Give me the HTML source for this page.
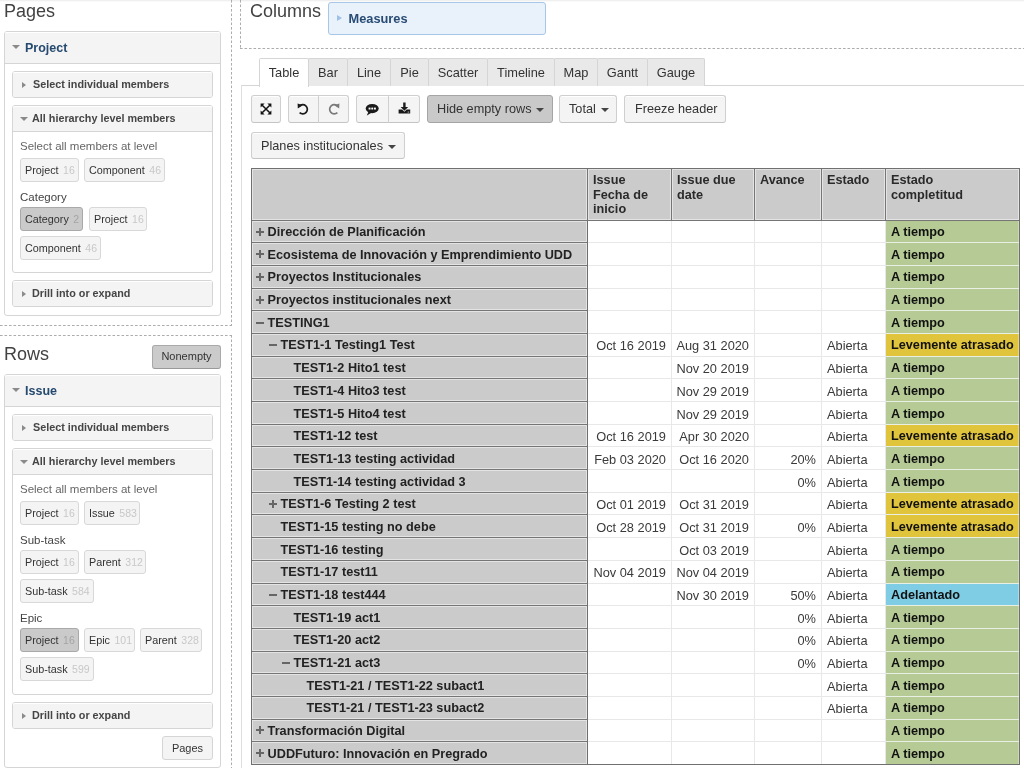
<!DOCTYPE html>
<html><head><meta charset="utf-8">
<style>
*{box-sizing:border-box;margin:0;padding:0}
html,body{will-change:transform;width:1024px;height:768px;overflow:hidden;background:#fff;font-family:"Liberation Sans",sans-serif;color:#333;position:relative}
.abs{position:absolute}
.topshade{position:absolute;left:0;top:0;width:1024px;height:2px;background:linear-gradient(#ebebeb,#fff)}
.title{position:absolute;font-size:18px;color:#424242;line-height:20px}
.dashv{position:absolute;width:1px;background:repeating-linear-gradient(to bottom,#c4c4c4 0 2.6px,transparent 2.6px 4.5px)}
.dashh{position:absolute;height:1px;background:repeating-linear-gradient(to right,#c4c4c4 0 2.6px,transparent 2.6px 4.5px)}
.panel{position:absolute;border:1px solid #d5d5d5;border-radius:3px;background:#fff}
.phead{position:absolute;left:0;right:0;top:0;background:#f4f4f4;border-bottom:1px solid #d5d5d5;border-radius:2px 2px 0 0;box-shadow:inset 0 1px 0 #fff}
.phead .t{position:absolute;font-weight:bold;color:#25496f;font-size:12.5px;margin-top:1px}
.tri-d{position:absolute;width:0;height:0;border-left:4px solid transparent;border-right:4px solid transparent;border-top:4.5px solid #8a8a8a}
.tri-r{position:absolute;width:0;height:0;border-top:3.5px solid transparent;border-bottom:3.5px solid transparent;border-left:4px solid #8a8a8a}
.sub{position:absolute;border:1px solid #d5d5d5;border-radius:3px;background:#fff}
.shead{position:absolute;left:0;right:0;top:0;background:#f4f4f4;border-radius:2px;box-shadow:inset 0 1px 0 #fff}
.shead .t{position:absolute;font-weight:bold;color:#454545;font-size:10.8px;white-space:nowrap}
.lbl{position:absolute;font-size:11.5px;color:#666;white-space:nowrap}
.lbl2{position:absolute;font-size:11.5px;color:#444;white-space:nowrap}
.chip{position:absolute;height:24px;border:1px solid #d8d8d8;border-radius:3px;background:#f4f4f4;font-size:10.8px;color:#333;line-height:22px;padding-left:4px;white-space:nowrap}
.chip i{font-style:normal;color:#c8c8c8;margin-left:4.5px;font-size:10.5px}
.chip.on{background:#cacaca;border-color:#a9a9a9}
.chip.on i{color:#a4a4a4}
.btn{position:absolute;border:1px solid #d5d5d5;border-radius:3px;background:#f4f4f4;font-size:12.5px;color:#333;text-align:center;white-space:nowrap}

.measures{position:absolute;left:328px;top:2px;width:218px;height:33px;border:1px solid #a8c6e8;border-radius:3px;background:#e9f1fb}
.measures .t{position:absolute;left:19.5px;top:8px;font-weight:bold;font-size:12.8px;color:#274b74}
.tabline{position:absolute;left:241px;top:85px;width:783px;height:0;border-top:1px solid #d5d5d5}
.tabv{position:absolute;left:241px;top:85px;width:0;height:683px;border-left:1px solid #dedede}
.tab{position:absolute;top:58px;height:28px;border:1px solid #d5d5d5;border-bottom:none;background:#e9e9e9;font-size:12.8px;color:#333;text-align:center;line-height:27px;border-radius:2px 2px 0 0}
.tab.on{background:#fff;height:29px}
.tb{position:absolute;top:95px;height:28px;border:1px solid #cfcfcf;border-bottom-color:#c4c4c4;border-radius:3px;background:#f4f4f4;box-shadow:inset 0 1px 0 #fff;font-size:12.7px;color:#333;white-space:nowrap}
.tb.dk{background:#c9c9c9;border-color:#a5a5a5;box-shadow:none}
.caret{display:inline-block;width:0;height:0;border-left:4px solid transparent;border-right:4px solid transparent;border-top:4px solid #444;vertical-align:middle;margin-left:5px;position:relative;top:0px}
.tbl{position:absolute;border:1px solid #6e6e6e;background:#6e6e6e}
.tblb{position:absolute;border:1px solid #707070;background:transparent}
.hc{position:absolute;background:#cbcbcb;border-right:1px solid #757575;border-bottom:1px solid #757575;box-shadow:inset 0 1px 0 #e4e4e4,inset 0 -1px 0 #e4e4e4,inset 1px 0 0 #e4e4e4,inset -1px 0 0 #e4e4e4}
.hc .ht{position:absolute;left:5px;top:4px;font-weight:bold;font-size:12.7px;line-height:14.5px;color:#2a2a2a}
.rh{position:absolute;background:#cbcbcb;border-bottom:1px solid #757575;box-shadow:inset 0 1px 0 #e4e4e4,inset 0 -1px 0 #e4e4e4,inset 1px 0 0 #e4e4e4,inset -1px 0 0 #e4e4e4}
.rt{position:absolute;top:4px;font-weight:bold;font-size:12.7px;color:#222;white-space:nowrap;line-height:15px}
.ip,.im{position:absolute}
.im{top:9.5px;width:8px;height:2px;background:#666}
.ip{top:6px;width:8px;height:8px;background:linear-gradient(#666,#666) center/8px 2px no-repeat,linear-gradient(#666,#666) center/2px 8px no-repeat}
.dc{position:absolute;background:#fff;border-bottom:1px solid #e8e8e8;border-right:1px solid #e8e8e8;text-align:right}
.dc span{position:absolute;right:5px;top:4px;font-size:12.8px;color:#3a3a3a;line-height:15px;white-space:nowrap}
.dc.l span{left:5px;right:auto}
.sc{position:absolute;border-bottom:1px solid #e9efe2;box-shadow:inset -1px 0 0 rgba(255,255,255,.3)}
.sc span{position:absolute;left:5px;top:4px;font-weight:bold;font-size:12.7px;color:#111;line-height:15px;white-space:nowrap}
.sc.g{background:#b5ca95}
.sc.y{background:#dfc43c}
.sc.b{background:#7fcce5}
</style></head><body>
<div class="topshade"></div>

<!-- LEFT: Pages -->
<div class="title" style="left:4px;top:1px">Pages</div>
<svg class="abs" style="left:231px;top:0px" width="1" height="326"><line x1="0.5" y1="0" x2="0.5" y2="326" stroke="#acacac" stroke-width="1" stroke-dasharray="2.6 1.9"/></svg>
<svg class="abs" style="left:0px;top:325px" width="232" height="1"><line x1="0" y1="0.5" x2="232" y2="0.5" stroke="#acacac" stroke-width="1" stroke-dasharray="2.6 1.9"/></svg>

<div class="panel" style="left:4px;top:31px;width:217px;height:285px">
  <div class="phead" style="height:32px"><div class="tri-d" style="left:7px;top:13px"></div><div class="t" style="left:20px;top:8px">Project</div></div>
  <div class="sub" style="left:7px;top:39px;width:201px;height:27px">
    <div class="shead" style="height:25px"><div class="tri-r" style="left:9px;top:10px"></div><div class="t" style="left:20px;top:6px">Select individual members</div></div>
  </div>
  <div class="sub" style="left:7px;top:73px;width:201px;height:168px">
    <div class="shead" style="height:26px;border-bottom:1px solid #d5d5d5;border-radius:2px 2px 0 0"><div class="tri-d" style="left:7px;top:11px"></div><div class="t" style="left:19px;top:6px">All hierarchy level members</div></div>
  </div>
  <div class="sub" style="left:7px;top:248px;width:201px;height:27px">
    <div class="shead" style="height:25px"><div class="tri-r" style="left:9px;top:10px"></div><div class="t" style="left:19px;top:6px">Drill into or expand</div></div>
  </div>
</div>
<div class="lbl" style="left:20px;top:140px">Select all members at level</div>
<div class="chip" style="left:20px;top:158px;width:59px">Project<i>16</i></div>
<div class="chip" style="left:84px;top:158px;width:81px">Component<i>46</i></div>
<div class="lbl2" style="left:20px;top:191px">Category</div>
<div class="chip on" style="left:20px;top:207px;width:63px">Category<i>2</i></div>
<div class="chip" style="left:89px;top:207px;width:58px">Project<i>16</i></div>
<div class="chip" style="left:20px;top:236px;width:81px">Component<i>46</i></div>

<!-- LEFT: Rows -->
<svg class="abs" style="left:231px;top:335px" width="1" height="433"><line x1="0.5" y1="0" x2="0.5" y2="433" stroke="#acacac" stroke-width="1" stroke-dasharray="2.6 1.9"/></svg>
<svg class="abs" style="left:0px;top:335px" width="232" height="1"><line x1="0" y1="0.5" x2="232" y2="0.5" stroke="#acacac" stroke-width="1" stroke-dasharray="2.6 1.9"/></svg>
<div class="title" style="left:4px;top:344px">Rows</div>
<div class="btn" style="left:152px;top:345px;width:69px;height:23px;line-height:21px;background:#cbcbcb;border-color:#a9a9a9;border-bottom-color:#999;font-size:11px;height:24px">Nonempty</div>

<div class="panel" style="left:4px;top:374px;width:217px;height:394px">
  <div class="phead" style="height:32px"><div class="tri-d" style="left:7px;top:13px"></div><div class="t" style="left:20px;top:8px">Issue</div></div>
  <div class="sub" style="left:7px;top:39px;width:201px;height:27px">
    <div class="shead" style="height:25px"><div class="tri-r" style="left:9px;top:10px"></div><div class="t" style="left:20px;top:6px">Select individual members</div></div>
  </div>
  <div class="sub" style="left:7px;top:73px;width:201px;height:247px">
    <div class="shead" style="height:26px;border-bottom:1px solid #d5d5d5;border-radius:2px 2px 0 0"><div class="tri-d" style="left:7px;top:11px"></div><div class="t" style="left:19px;top:6px">All hierarchy level members</div></div>
  </div>
  <div class="sub" style="left:7px;top:327px;width:201px;height:27px">
    <div class="shead" style="height:25px"><div class="tri-r" style="left:9px;top:10px"></div><div class="t" style="left:19px;top:6px">Drill into or expand</div></div>
  </div>
</div>
<div class="lbl" style="left:20px;top:483px">Select all members at level</div>
<div class="chip" style="left:20px;top:501px;width:59px">Project<i>16</i></div>
<div class="chip" style="left:84px;top:501px;width:56px">Issue<i>583</i></div>
<div class="lbl2" style="left:20px;top:534px">Sub-task</div>
<div class="chip" style="left:20px;top:550px;width:59px">Project<i>16</i></div>
<div class="chip" style="left:84px;top:550px;width:62px">Parent<i>312</i></div>
<div class="chip" style="left:20px;top:579px;width:74px">Sub-task<i>584</i></div>
<div class="lbl2" style="left:20px;top:612px">Epic</div>
<div class="chip on" style="left:20px;top:628px;width:59px">Project<i>16</i></div>
<div class="chip" style="left:84px;top:628px;width:51px">Epic<i>101</i></div>
<div class="chip" style="left:140px;top:628px;width:62px">Parent<i>328</i></div>
<div class="chip" style="left:20px;top:657px;width:74px">Sub-task<i>599</i></div>
<div class="btn" style="left:162px;top:736px;width:51px;height:24px;line-height:22px;font-size:11px">Pages</div>

<!-- RIGHT: Columns -->
<svg class="abs" style="left:240px;top:0px" width="1" height="49"><line x1="0.5" y1="0" x2="0.5" y2="49" stroke="#acacac" stroke-width="1" stroke-dasharray="2.6 1.9"/></svg>
<svg class="abs" style="left:240px;top:48px" width="784" height="1"><line x1="0" y1="0.5" x2="784" y2="0.5" stroke="#acacac" stroke-width="1" stroke-dasharray="2.6 1.9"/></svg>
<div class="title" style="left:250px;top:1px">Columns</div>


<div class="measures"><div class="tri-r" style="left:8px;top:11.5px;border-top-width:3.8px;border-bottom-width:3.8px;border-left-width:5px;border-left-color:#9dc0e6"></div><div class="t">Measures</div></div>
<div class="tabline"></div>
<div class="tabv"></div>
<div class="tab" style="left:308px;width:40px">Bar</div>
<div class="tab" style="left:347px;width:44px">Line</div>
<div class="tab" style="left:390px;width:39px">Pie</div>
<div class="tab" style="left:428px;width:60px">Scatter</div>
<div class="tab" style="left:487px;width:68px">Timeline</div>
<div class="tab" style="left:554px;width:44px">Map</div>
<div class="tab" style="left:597px;width:51px">Gantt</div>
<div class="tab" style="left:647px;width:58px">Gauge</div>
<div class="tab on" style="left:259px;width:50px">Table</div>

<div class="tb" style="left:251px;width:30px"></div>
<div class="tb" style="left:288px;width:31px;border-radius:3px 0 0 3px"></div>
<div class="tb" style="left:318px;width:31px;border-radius:0 3px 3px 0"></div>
<div class="tb" style="left:356px;width:33px;border-radius:3px 0 0 3px"></div>
<div class="tb" style="left:388px;width:32px;border-radius:0 3px 3px 0"></div>
<svg class="abs" style="left:258px;top:101px" width="16" height="16" viewBox="0 0 16 16">
 <g stroke="#111" stroke-width="1.5" fill="none"><path d="M4.2 4.2 L11.8 11.8 M11.8 4.2 L4.2 11.8"/></g>
 <g fill="#111"><path d="M2.6 2.6 H6.6 L2.6 6.6 Z"/><path d="M13.4 2.6 V6.6 L9.4 2.6 Z"/><path d="M2.6 13.4 V9.4 L6.6 13.4 Z"/><path d="M13.4 13.4 H9.4 L13.4 9.4 Z"/></g>
</svg>
<svg class="abs" style="left:295px;top:101px" width="16" height="16" viewBox="0 0 16 16">
 <path d="M4.3 5.2 A4.6 4.6 0 1 1 4.6 11.6" fill="none" stroke="#1a1a1a" stroke-width="1.7"/>
 <path d="M2.6 2.6 L7.8 4.3 L2.8 7.6 Z" fill="#1a1a1a"/>
</svg>
<svg class="abs" style="left:326px;top:101px" width="16" height="16" viewBox="0 0 16 16">
 <g transform="translate(16,0) scale(-1,1)"><path d="M4.3 5.2 A4.6 4.6 0 1 1 4.6 11.6" fill="none" stroke="#7a7a7a" stroke-width="1.7"/>
 <path d="M2.6 2.6 L7.8 4.3 L2.8 7.6 Z" fill="#7a7a7a"/></g>
</svg>
<svg class="abs" style="left:364px;top:102px" width="16" height="14" viewBox="0 0 16 14">
 <ellipse cx="8.2" cy="6.6" rx="6.5" ry="4.6" fill="#1a1a1a"/>
 <path d="M4.5 9.5 L2.8 13.4 L8 10.6 Z" fill="#1a1a1a"/>
 <rect x="4.6" y="5.6" width="1.9" height="1.9" fill="#fff"/><rect x="7.3" y="5.6" width="1.9" height="1.9" fill="#fff"/><rect x="10" y="5.6" width="1.9" height="1.9" fill="#fff"/>
</svg>
<svg class="abs" style="left:396px;top:100px" width="16" height="16" viewBox="0 0 16 16">
 <path d="M7.2 2.5 H9.6 V7 H12.2 L8.4 10.8 L4.6 7 H7.2 Z" fill="#1a1a1a"/>
 <path d="M2.6 9.6 H6.2 L8.4 11.8 L10.6 9.6 H14.2 V13.6 H2.6 Z" fill="#1a1a1a"/>
 <rect x="11.6" y="11.4" width="1.6" height="1.4" fill="#888"/>
</svg>
<div class="tb dk" style="left:427px;width:126px;padding-left:9px;line-height:27px">Hide empty rows<span class="caret"></span></div>
<div class="tb" style="left:559px;width:58px;padding-left:9px;line-height:27px">Total<span class="caret"></span></div>
<div class="tb" style="left:624px;width:102px;padding-left:10px;line-height:27px">Freeze header</div>
<div class="tb" style="left:251px;top:132px;width:154px;height:27px;padding-left:9px;line-height:26px">Planes institucionales<span class="caret"></span></div>
<div class="tbl" style="left:251px;top:168px;width:769px;height:597px"></div>
<div class="hc" style="left:252px;top:169px;width:336px;height:52px"><div class="ht"></div></div>
<div class="hc" style="left:588px;top:169px;width:84px;height:52px"><div class="ht">Issue<br>Fecha de<br>inicio</div></div>
<div class="hc" style="left:672px;top:169px;width:83px;height:52px"><div class="ht">Issue due<br>date</div></div>
<div class="hc" style="left:755px;top:169px;width:67px;height:52px"><div class="ht">Avance</div></div>
<div class="hc" style="left:822px;top:169px;width:64px;height:52px"><div class="ht">Estado</div></div>
<div class="hc" style="left:886px;top:169px;width:134px;height:52px"><div class="ht">Estado<br>completitud</div></div>
<div class="rh" style="left:252px;top:221.00px;width:335px;height:22.00px"><div class="ip" style="left:3.6px;top:6.60px"></div><div class="rt" style="left:15.6px;top:4.10px">Dirección de Planificación</div></div>
<div class="dc" style="left:588px;top:221.00px;width:84px;height:22.00px"><span style="top:4.10px"></span></div>
<div class="dc" style="left:672px;top:221.00px;width:83px;height:22.00px"><span style="top:4.10px"></span></div>
<div class="dc" style="left:755px;top:221.00px;width:67px;height:22.00px"><span style="top:4.10px"></span></div>
<div class="dc l" style="left:822px;top:221.00px;width:64px;height:22.00px"><span style="top:4.10px"></span></div>
<div class="sc g" style="left:886px;top:221.00px;width:133px;height:22.00px"><span style="top:4.10px">A tiempo</span></div>
<div class="rh" style="left:252px;top:243.00px;width:335px;height:23.00px"><div class="ip" style="left:3.6px;top:7.28px"></div><div class="rt" style="left:15.6px;top:4.78px">Ecosistema de Innovación y Emprendimiento UDD</div></div>
<div class="dc" style="left:588px;top:243.00px;width:84px;height:23.00px"><span style="top:4.78px"></span></div>
<div class="dc" style="left:672px;top:243.00px;width:83px;height:23.00px"><span style="top:4.78px"></span></div>
<div class="dc" style="left:755px;top:243.00px;width:67px;height:23.00px"><span style="top:4.78px"></span></div>
<div class="dc l" style="left:822px;top:243.00px;width:64px;height:23.00px"><span style="top:4.78px"></span></div>
<div class="sc g" style="left:886px;top:243.00px;width:133px;height:23.00px"><span style="top:4.78px">A tiempo</span></div>
<div class="rh" style="left:252px;top:266.00px;width:335px;height:23.00px"><div class="ip" style="left:3.6px;top:6.95px"></div><div class="rt" style="left:15.6px;top:4.45px">Proyectos Institucionales</div></div>
<div class="dc" style="left:588px;top:266.00px;width:84px;height:23.00px"><span style="top:4.45px"></span></div>
<div class="dc" style="left:672px;top:266.00px;width:83px;height:23.00px"><span style="top:4.45px"></span></div>
<div class="dc" style="left:755px;top:266.00px;width:67px;height:23.00px"><span style="top:4.45px"></span></div>
<div class="dc l" style="left:822px;top:266.00px;width:64px;height:23.00px"><span style="top:4.45px"></span></div>
<div class="sc g" style="left:886px;top:266.00px;width:133px;height:23.00px"><span style="top:4.45px">A tiempo</span></div>
<div class="rh" style="left:252px;top:289.00px;width:335px;height:22.00px"><div class="ip" style="left:3.6px;top:6.63px"></div><div class="rt" style="left:15.6px;top:4.13px">Proyectos institucionales next</div></div>
<div class="dc" style="left:588px;top:289.00px;width:84px;height:22.00px"><span style="top:4.13px"></span></div>
<div class="dc" style="left:672px;top:289.00px;width:83px;height:22.00px"><span style="top:4.13px"></span></div>
<div class="dc" style="left:755px;top:289.00px;width:67px;height:22.00px"><span style="top:4.13px"></span></div>
<div class="dc l" style="left:822px;top:289.00px;width:64px;height:22.00px"><span style="top:4.13px"></span></div>
<div class="sc g" style="left:886px;top:289.00px;width:133px;height:22.00px"><span style="top:4.13px">A tiempo</span></div>
<div class="rh" style="left:252px;top:311.00px;width:335px;height:23.00px"><div class="im" style="left:3.6px;top:10.60px"></div><div class="rt" style="left:15.6px;top:4.80px">TESTING1</div></div>
<div class="dc" style="left:588px;top:311.00px;width:84px;height:23.00px"><span style="top:4.80px"></span></div>
<div class="dc" style="left:672px;top:311.00px;width:83px;height:23.00px"><span style="top:4.80px"></span></div>
<div class="dc" style="left:755px;top:311.00px;width:67px;height:23.00px"><span style="top:4.80px"></span></div>
<div class="dc l" style="left:822px;top:311.00px;width:64px;height:23.00px"><span style="top:4.80px"></span></div>
<div class="sc g" style="left:886px;top:311.00px;width:133px;height:23.00px"><span style="top:4.80px">A tiempo</span></div>
<div class="rh" style="left:252px;top:334.00px;width:335px;height:23.00px"><div class="im" style="left:16.6px;top:10.27px"></div><div class="rt" style="left:28.6px;top:4.47px">TEST1-1 Testing1 Test</div></div>
<div class="dc" style="left:588px;top:334.00px;width:84px;height:23.00px"><span style="top:4.47px">Oct 16 2019</span></div>
<div class="dc" style="left:672px;top:334.00px;width:83px;height:23.00px"><span style="top:4.47px">Aug 31 2020</span></div>
<div class="dc" style="left:755px;top:334.00px;width:67px;height:23.00px"><span style="top:4.47px"></span></div>
<div class="dc l" style="left:822px;top:334.00px;width:64px;height:23.00px"><span style="top:4.47px">Abierta</span></div>
<div class="sc y" style="left:886px;top:334.00px;width:133px;height:23.00px"><span style="top:4.47px">Levemente atrasado</span></div>
<div class="rh" style="left:252px;top:357.00px;width:335px;height:22.00px"><div class="rt" style="left:41.6px;top:4.15px">TEST1-2 Hito1 test</div></div>
<div class="dc" style="left:588px;top:357.00px;width:84px;height:22.00px"><span style="top:4.15px"></span></div>
<div class="dc" style="left:672px;top:357.00px;width:83px;height:22.00px"><span style="top:4.15px">Nov 20 2019</span></div>
<div class="dc" style="left:755px;top:357.00px;width:67px;height:22.00px"><span style="top:4.15px"></span></div>
<div class="dc l" style="left:822px;top:357.00px;width:64px;height:22.00px"><span style="top:4.15px">Abierta</span></div>
<div class="sc g" style="left:886px;top:357.00px;width:133px;height:22.00px"><span style="top:4.15px">A tiempo</span></div>
<div class="rh" style="left:252px;top:379.00px;width:335px;height:23.00px"><div class="rt" style="left:41.6px;top:4.82px">TEST1-4 Hito3 test</div></div>
<div class="dc" style="left:588px;top:379.00px;width:84px;height:23.00px"><span style="top:4.82px"></span></div>
<div class="dc" style="left:672px;top:379.00px;width:83px;height:23.00px"><span style="top:4.82px">Nov 29 2019</span></div>
<div class="dc" style="left:755px;top:379.00px;width:67px;height:23.00px"><span style="top:4.82px"></span></div>
<div class="dc l" style="left:822px;top:379.00px;width:64px;height:23.00px"><span style="top:4.82px">Abierta</span></div>
<div class="sc g" style="left:886px;top:379.00px;width:133px;height:23.00px"><span style="top:4.82px">A tiempo</span></div>
<div class="rh" style="left:252px;top:402.00px;width:335px;height:23.00px"><div class="rt" style="left:41.6px;top:4.50px">TEST1-5 Hito4 test</div></div>
<div class="dc" style="left:588px;top:402.00px;width:84px;height:23.00px"><span style="top:4.50px"></span></div>
<div class="dc" style="left:672px;top:402.00px;width:83px;height:23.00px"><span style="top:4.50px">Nov 29 2019</span></div>
<div class="dc" style="left:755px;top:402.00px;width:67px;height:23.00px"><span style="top:4.50px"></span></div>
<div class="dc l" style="left:822px;top:402.00px;width:64px;height:23.00px"><span style="top:4.50px">Abierta</span></div>
<div class="sc g" style="left:886px;top:402.00px;width:133px;height:23.00px"><span style="top:4.50px">A tiempo</span></div>
<div class="rh" style="left:252px;top:425.00px;width:335px;height:22.00px"><div class="rt" style="left:41.6px;top:4.17px">TEST1-12 test</div></div>
<div class="dc" style="left:588px;top:425.00px;width:84px;height:22.00px"><span style="top:4.17px">Oct 16 2019</span></div>
<div class="dc" style="left:672px;top:425.00px;width:83px;height:22.00px"><span style="top:4.17px">Apr 30 2020</span></div>
<div class="dc" style="left:755px;top:425.00px;width:67px;height:22.00px"><span style="top:4.17px"></span></div>
<div class="dc l" style="left:822px;top:425.00px;width:64px;height:22.00px"><span style="top:4.17px">Abierta</span></div>
<div class="sc y" style="left:886px;top:425.00px;width:133px;height:22.00px"><span style="top:4.17px">Levemente atrasado</span></div>
<div class="rh" style="left:252px;top:447.00px;width:335px;height:23.00px"><div class="rt" style="left:41.6px;top:4.85px">TEST1-13 testing actividad</div></div>
<div class="dc" style="left:588px;top:447.00px;width:84px;height:23.00px"><span style="top:4.85px">Feb 03 2020</span></div>
<div class="dc" style="left:672px;top:447.00px;width:83px;height:23.00px"><span style="top:4.85px">Oct 16 2020</span></div>
<div class="dc" style="left:755px;top:447.00px;width:67px;height:23.00px"><span style="top:4.85px">20%</span></div>
<div class="dc l" style="left:822px;top:447.00px;width:64px;height:23.00px"><span style="top:4.85px">Abierta</span></div>
<div class="sc g" style="left:886px;top:447.00px;width:133px;height:23.00px"><span style="top:4.85px">A tiempo</span></div>
<div class="rh" style="left:252px;top:470.00px;width:335px;height:23.00px"><div class="rt" style="left:41.6px;top:4.53px">TEST1-14 testing actividad 3</div></div>
<div class="dc" style="left:588px;top:470.00px;width:84px;height:23.00px"><span style="top:4.53px"></span></div>
<div class="dc" style="left:672px;top:470.00px;width:83px;height:23.00px"><span style="top:4.53px"></span></div>
<div class="dc" style="left:755px;top:470.00px;width:67px;height:23.00px"><span style="top:4.53px">0%</span></div>
<div class="dc l" style="left:822px;top:470.00px;width:64px;height:23.00px"><span style="top:4.53px">Abierta</span></div>
<div class="sc g" style="left:886px;top:470.00px;width:133px;height:23.00px"><span style="top:4.53px">A tiempo</span></div>
<div class="rh" style="left:252px;top:493.00px;width:335px;height:22.00px"><div class="ip" style="left:16.6px;top:6.70px"></div><div class="rt" style="left:28.6px;top:4.20px">TEST1-6 Testing 2 test</div></div>
<div class="dc" style="left:588px;top:493.00px;width:84px;height:22.00px"><span style="top:4.20px">Oct 01 2019</span></div>
<div class="dc" style="left:672px;top:493.00px;width:83px;height:22.00px"><span style="top:4.20px">Oct 31 2019</span></div>
<div class="dc" style="left:755px;top:493.00px;width:67px;height:22.00px"><span style="top:4.20px"></span></div>
<div class="dc l" style="left:822px;top:493.00px;width:64px;height:22.00px"><span style="top:4.20px">Abierta</span></div>
<div class="sc y" style="left:886px;top:493.00px;width:133px;height:22.00px"><span style="top:4.20px">Levemente atrasado</span></div>
<div class="rh" style="left:252px;top:515.00px;width:335px;height:23.00px"><div class="rt" style="left:28.6px;top:4.88px">TEST1-15 testing no debe</div></div>
<div class="dc" style="left:588px;top:515.00px;width:84px;height:23.00px"><span style="top:4.88px">Oct 28 2019</span></div>
<div class="dc" style="left:672px;top:515.00px;width:83px;height:23.00px"><span style="top:4.88px">Oct 31 2019</span></div>
<div class="dc" style="left:755px;top:515.00px;width:67px;height:23.00px"><span style="top:4.88px">0%</span></div>
<div class="dc l" style="left:822px;top:515.00px;width:64px;height:23.00px"><span style="top:4.88px">Abierta</span></div>
<div class="sc y" style="left:886px;top:515.00px;width:133px;height:23.00px"><span style="top:4.88px">Levemente atrasado</span></div>
<div class="rh" style="left:252px;top:538.00px;width:335px;height:23.00px"><div class="rt" style="left:28.6px;top:4.55px">TEST1-16 testing</div></div>
<div class="dc" style="left:588px;top:538.00px;width:84px;height:23.00px"><span style="top:4.55px"></span></div>
<div class="dc" style="left:672px;top:538.00px;width:83px;height:23.00px"><span style="top:4.55px">Oct 03 2019</span></div>
<div class="dc" style="left:755px;top:538.00px;width:67px;height:23.00px"><span style="top:4.55px"></span></div>
<div class="dc l" style="left:822px;top:538.00px;width:64px;height:23.00px"><span style="top:4.55px">Abierta</span></div>
<div class="sc g" style="left:886px;top:538.00px;width:133px;height:23.00px"><span style="top:4.55px">A tiempo</span></div>
<div class="rh" style="left:252px;top:561.00px;width:335px;height:23.00px"><div class="rt" style="left:28.6px;top:4.23px">TEST1-17 test11</div></div>
<div class="dc" style="left:588px;top:561.00px;width:84px;height:23.00px"><span style="top:4.23px">Nov 04 2019</span></div>
<div class="dc" style="left:672px;top:561.00px;width:83px;height:23.00px"><span style="top:4.23px">Nov 04 2019</span></div>
<div class="dc" style="left:755px;top:561.00px;width:67px;height:23.00px"><span style="top:4.23px"></span></div>
<div class="dc l" style="left:822px;top:561.00px;width:64px;height:23.00px"><span style="top:4.23px">Abierta</span></div>
<div class="sc g" style="left:886px;top:561.00px;width:133px;height:23.00px"><span style="top:4.23px">A tiempo</span></div>
<div class="rh" style="left:252px;top:584.00px;width:335px;height:22.00px"><div class="im" style="left:16.6px;top:9.70px"></div><div class="rt" style="left:28.6px;top:3.90px">TEST1-18 test444</div></div>
<div class="dc" style="left:588px;top:584.00px;width:84px;height:22.00px"><span style="top:3.90px"></span></div>
<div class="dc" style="left:672px;top:584.00px;width:83px;height:22.00px"><span style="top:3.90px">Nov 30 2019</span></div>
<div class="dc" style="left:755px;top:584.00px;width:67px;height:22.00px"><span style="top:3.90px">50%</span></div>
<div class="dc l" style="left:822px;top:584.00px;width:64px;height:22.00px"><span style="top:3.90px">Abierta</span></div>
<div class="sc b" style="left:886px;top:584.00px;width:133px;height:22.00px"><span style="top:3.90px">Adelantado</span></div>
<div class="rh" style="left:252px;top:606.00px;width:335px;height:23.00px"><div class="rt" style="left:41.6px;top:4.57px">TEST1-19 act1</div></div>
<div class="dc" style="left:588px;top:606.00px;width:84px;height:23.00px"><span style="top:4.57px"></span></div>
<div class="dc" style="left:672px;top:606.00px;width:83px;height:23.00px"><span style="top:4.57px"></span></div>
<div class="dc" style="left:755px;top:606.00px;width:67px;height:23.00px"><span style="top:4.57px">0%</span></div>
<div class="dc l" style="left:822px;top:606.00px;width:64px;height:23.00px"><span style="top:4.57px">Abierta</span></div>
<div class="sc g" style="left:886px;top:606.00px;width:133px;height:23.00px"><span style="top:4.57px">A tiempo</span></div>
<div class="rh" style="left:252px;top:629.00px;width:335px;height:23.00px"><div class="rt" style="left:41.6px;top:4.25px">TEST1-20 act2</div></div>
<div class="dc" style="left:588px;top:629.00px;width:84px;height:23.00px"><span style="top:4.25px"></span></div>
<div class="dc" style="left:672px;top:629.00px;width:83px;height:23.00px"><span style="top:4.25px"></span></div>
<div class="dc" style="left:755px;top:629.00px;width:67px;height:23.00px"><span style="top:4.25px">0%</span></div>
<div class="dc l" style="left:822px;top:629.00px;width:64px;height:23.00px"><span style="top:4.25px">Abierta</span></div>
<div class="sc g" style="left:886px;top:629.00px;width:133px;height:23.00px"><span style="top:4.25px">A tiempo</span></div>
<div class="rh" style="left:252px;top:652.00px;width:335px;height:22.00px"><div class="im" style="left:29.6px;top:9.72px"></div><div class="rt" style="left:41.6px;top:3.92px">TEST1-21 act3</div></div>
<div class="dc" style="left:588px;top:652.00px;width:84px;height:22.00px"><span style="top:3.92px"></span></div>
<div class="dc" style="left:672px;top:652.00px;width:83px;height:22.00px"><span style="top:3.92px"></span></div>
<div class="dc" style="left:755px;top:652.00px;width:67px;height:22.00px"><span style="top:3.92px">0%</span></div>
<div class="dc l" style="left:822px;top:652.00px;width:64px;height:22.00px"><span style="top:3.92px">Abierta</span></div>
<div class="sc g" style="left:886px;top:652.00px;width:133px;height:22.00px"><span style="top:3.92px">A tiempo</span></div>
<div class="rh" style="left:252px;top:674.00px;width:335px;height:23.00px"><div class="rt" style="left:54.6px;top:4.60px">TEST1-21 / TEST1-22 subact1</div></div>
<div class="dc" style="left:588px;top:674.00px;width:84px;height:23.00px"><span style="top:4.60px"></span></div>
<div class="dc" style="left:672px;top:674.00px;width:83px;height:23.00px"><span style="top:4.60px"></span></div>
<div class="dc" style="left:755px;top:674.00px;width:67px;height:23.00px"><span style="top:4.60px"></span></div>
<div class="dc l" style="left:822px;top:674.00px;width:64px;height:23.00px"><span style="top:4.60px">Abierta</span></div>
<div class="sc g" style="left:886px;top:674.00px;width:133px;height:23.00px"><span style="top:4.60px">A tiempo</span></div>
<div class="rh" style="left:252px;top:697.00px;width:335px;height:23.00px"><div class="rt" style="left:54.6px;top:4.28px">TEST1-21 / TEST1-23 subact2</div></div>
<div class="dc" style="left:588px;top:697.00px;width:84px;height:23.00px"><span style="top:4.28px"></span></div>
<div class="dc" style="left:672px;top:697.00px;width:83px;height:23.00px"><span style="top:4.28px"></span></div>
<div class="dc" style="left:755px;top:697.00px;width:67px;height:23.00px"><span style="top:4.28px"></span></div>
<div class="dc l" style="left:822px;top:697.00px;width:64px;height:23.00px"><span style="top:4.28px">Abierta</span></div>
<div class="sc g" style="left:886px;top:697.00px;width:133px;height:23.00px"><span style="top:4.28px">A tiempo</span></div>
<div class="rh" style="left:252px;top:720.00px;width:335px;height:22.00px"><div class="ip" style="left:3.6px;top:6.45px"></div><div class="rt" style="left:15.6px;top:3.95px">Transformación Digital</div></div>
<div class="dc" style="left:588px;top:720.00px;width:84px;height:22.00px"><span style="top:3.95px"></span></div>
<div class="dc" style="left:672px;top:720.00px;width:83px;height:22.00px"><span style="top:3.95px"></span></div>
<div class="dc" style="left:755px;top:720.00px;width:67px;height:22.00px"><span style="top:3.95px"></span></div>
<div class="dc l" style="left:822px;top:720.00px;width:64px;height:22.00px"><span style="top:3.95px"></span></div>
<div class="sc g" style="left:886px;top:720.00px;width:133px;height:22.00px"><span style="top:3.95px">A tiempo</span></div>
<div class="rh" style="left:252px;top:742.00px;width:335px;height:23.00px"><div class="ip" style="left:3.6px;top:7.12px"></div><div class="rt" style="left:15.6px;top:4.62px">UDDFuturo: Innovación en Pregrado</div></div>
<div class="dc" style="left:588px;top:742.00px;width:84px;height:23.00px"><span style="top:4.62px"></span></div>
<div class="dc" style="left:672px;top:742.00px;width:83px;height:23.00px"><span style="top:4.62px"></span></div>
<div class="dc" style="left:755px;top:742.00px;width:67px;height:23.00px"><span style="top:4.62px"></span></div>
<div class="dc l" style="left:822px;top:742.00px;width:64px;height:23.00px"><span style="top:4.62px"></span></div>
<div class="sc g" style="left:886px;top:742.00px;width:133px;height:23.00px"><span style="top:4.62px">A tiempo</span></div>
<div class="tblb" style="left:251px;top:168px;width:769px;height:597px"></div>
</body></html>
